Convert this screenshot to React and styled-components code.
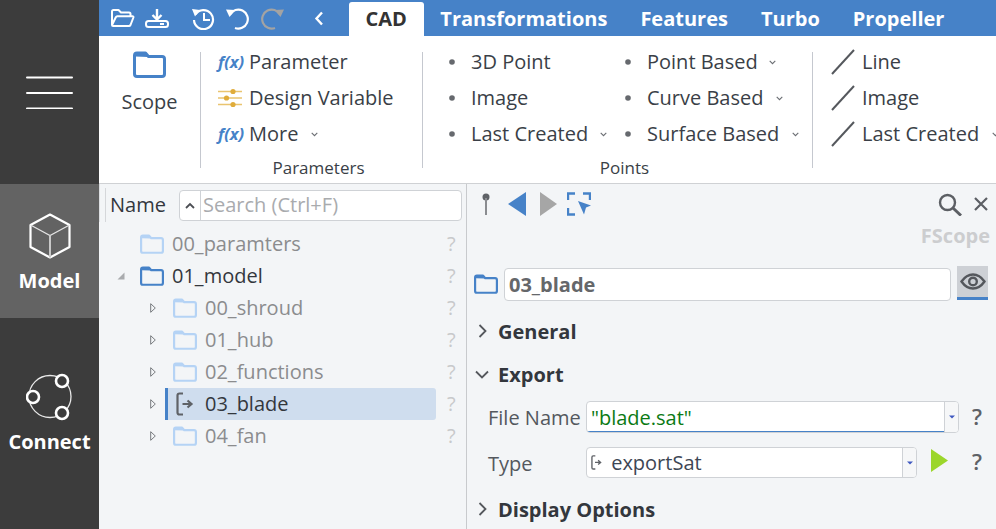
import React from 'react';
import styled, { createGlobalStyle } from 'styled-components';

const Global = createGlobalStyle`
  html, body { margin: 0; padding: 0; height: 100%; overflow: hidden; }
  #root { height: 529px; }
  * { box-sizing: border-box; }
  body { font-family: "Open Sans", "Liberation Sans", sans-serif; color: #3a3f47; }
`;

const Page = styled.div`display: flex; width: 996px; height: 529px; overflow: hidden; background: #f3f5f7;`;
const Sidebar = styled.nav`width: 99px; flex: none; background: #3c3c3c; display: flex; flex-direction: column;`;
const MenuCell = styled.div`height: 184px; display: flex; align-items: center; justify-content: center;`;
const SideItem = styled.div`
  height: ${p => p.$h}px; display: flex; flex-direction: column; align-items: center;
  padding-top: ${p => p.$top}px;
  background: ${p => p.$active ? '#636363' : 'transparent'};
  color: #fff; font-weight: 700; font-size: 20px; line-height: 26px;
`;
const SideLabel = styled.span`margin-top: ${p => p.$mt}px;`;
const Main = styled.div`flex: 1; min-width: 0; display: flex; flex-direction: column;`;

const TopBar = styled.header`height: 36px; flex: none; background: #4682c8; display: flex; align-items: flex-end;`;
const QuickIcons = styled.div`width: 250px; height: 36px; flex: none; display: flex; align-items: center;`;
const QuickSlot = styled.span`margin-left: ${p => p.$ml}px; display: block;`;
const Tab = styled.div`
  height: 34px; padding: 0 ${p => p.$active ? '17px' : '16.5px'} 2px 16.5px; display: flex; align-items: center;
  font-size: 20px; font-weight: 700; color: ${p => p.$active ? '#333' : '#fff'};
  background: ${p => p.$active ? '#fff' : 'transparent'};
  border-radius: 3px 3px 0 0;
`;
const Ribbon = styled.section`height: 148px; flex: none; background: #fff; border-bottom: 1px solid #cfd1d4; display: flex; overflow: hidden;`;
const Group = styled.div`width: ${p => p.$w}px; flex: none; display: flex; flex-direction: column;`;
const GroupBody = styled.div`display: flex; height: 116px; padding: 8px 0 0 ${p => p.$pl || 0}px;`;
const Column = styled.div`width: ${p => p.$w}px; flex: none;`;
const GroupLabel = styled.div`height: 32px; padding: 4px 0 0 14px; text-align: center; font-size: 17px; line-height: 24px;`;
const Divider = styled.div`width: 1px; height: 116px; margin-top: 16px; background: #c5c8cf; flex: none;`;
const RibbonRow = styled.div`height: 36px; display: flex; align-items: center; font-size: 20px; white-space: nowrap; line-height: 36px;`;
const RibbonIcon = styled.span`width: ${p => p.$w}px; flex: none; display: flex; align-items: center;`;
const Fx = styled.span`
  font-family: "Open Sans", sans-serif; font-style: italic; font-weight: 700; font-size: 16.5px;
  color: #4682c8;
`;
const Chev = styled.svg`margin-left: ${p => p.$ml}px; flex: none;`;
const ScopeGroup = styled.div`width: 101px; flex: none; display: flex; flex-direction: column; align-items: center; padding-top: 15px;`;
const ScopeLabel = styled.div`font-size: 20px; line-height: 28px; margin-top: 10px;`;

const Work = styled.div`flex: 1; min-height: 0; display: flex; background: #f3f5f7;`;
const TreePanel = styled.div`width: 368px; flex: none; border-right: 1px solid #c8cacd; display: flex; flex-direction: column;`;
const TreeHeader = styled.div`height: 44px; flex: none; padding: 6px 4px 0 0; display: flex; align-items: flex-start;`;
const HeaderEdge = styled.div`width: 1px; height: 38px; margin: -6px 5px 0 0; background: #dcdee1; flex: none;`;
const HeadName = styled.div`
  width: 74px; height: 34px; border-left: 1px solid #d5d7da; padding-left: 4px; margin-top: -2px;
  font-size: 20px; line-height: 34px; flex: none; color: #33373d;
`;
const SearchBox = styled.div`flex: 1; height: 31px; background: #fff; border: 1px solid #cfd2d6; border-radius: 4px; display: flex; align-items: stretch;`;
const SortCell = styled.div`width: 21px; border-right: 1px solid #cfd2d6; display: flex; align-items: center; justify-content: center; flex: none;`;
const SearchText = styled.div`padding-left: 2px; font-size: 20px; line-height: 28px; color: #a9abae;`;
const TreeList = styled.div``;
const TreeRow = styled.div`height: 32px; display: flex; align-items: center; padding-left: ${p => p.$indent}px;`;
const ArrowSlot = styled.span`width: ${p => p.$w}px; flex: none; display: flex; align-items: center;`;
const RowBody = styled.div`
  width: ${p => p.$w}px; height: 32px; flex: none; display: flex; align-items: center;
  background: ${p => p.$selected ? '#cfddee' : 'transparent'};
  border-left: 3px solid ${p => p.$selected ? '#4682c8' : 'transparent'};
  border-radius: 0 3px 3px 0; padding-left: ${p => p.$pl}px;
`;
const RowLabel = styled.span`
  margin-left: ${p => p.$ml}px; font-size: 20px; line-height: 32px; flex: 1; white-space: nowrap;
  color: ${p => p.$dim ? '#8b8c8e' : '#33373d'};
`;
const Q = styled.span`margin-left: 11px; font-size: 20px; color: #c8c9cb; flex: none; line-height: 32px;`;

const Props = styled.div`flex: 1; min-width: 0; padding: 0 8px 0 0; display: flex; flex-direction: column;`;
const ToolRow = styled.div`height: 40px; flex: none; display: flex; align-items: center; padding: 0 0 0 15px;`;
const ToolSlot = styled.span`margin-left: ${p => p.$ml}px; display: block;`;
const ToolSpacer = styled.div`flex: 1;`;
const FScope = styled.div`height: 28px; flex: none; text-align: right; font-weight: 700; font-size: 20px; line-height: 24px; color: #cccdcf; margin-right: -2px;`;
const NameRow = styled.div`height: 34px; margin: 15px 0 5px; flex: none; display: flex; align-items: center; padding-left: 7px;`;
const NameInput = styled.div`
  width: 447px; height: 33px; margin-left: 6px; background: #fff; border: 1px solid #cfd2d6; border-radius: 4px;
  padding-left: 4px; font-size: 20px; font-weight: 700; line-height: 32px; color: #65676a; flex: none;
`;
const EyeBtn = styled.div`width: 31px; height: 34px; margin: 0 0 2px 6px; background: #cdd0d5; border-bottom: 3px solid #4682c8; display: flex; align-items: center; justify-content: center; flex: none;`;
const Section = styled.div`height: ${p => p.$h}px; flex: none; display: flex; align-items: center; padding-left: ${p => p.$pl}px; font-weight: 700; font-size: 20px; color: #33373d;`;
const SectionChev = styled.span`width: ${p => p.$w}px; flex: none; display: flex; align-items: center;`;
const Field = styled.div`height: ${p => p.$h}px; flex: none; display: flex; align-items: center; padding-left: 21px;`;
const FieldLabel = styled.div`width: 98px; flex: none; font-size: 20px; color: #54585e; white-space: nowrap;`;
const Combo = styled.div`
  width: ${p => p.$w}px; height: ${p => p.$h}px; margin-bottom: 2px; flex: none; background: #fff; border: 1px solid #cfd2d6; border-radius: 4px;
  display: flex; align-items: stretch; overflow: hidden;
`;
const ComboValue = styled.div`
  flex: 1; display: flex; align-items: center; padding: ${p => p.$focus ? '3px' : '0'} 0 0 4px; font-size: 20px; line-height: 26px; white-space: nowrap;
  color: ${p => p.$code ? '#0b7a14' : '#3d4654'};
  border-bottom: ${p => p.$focus ? '1px solid #4682c8' : '0'};
`;
const ComboText = styled.span`margin-left: 9px;`;
const ComboDrop = styled.div`width: 14px; flex: none; border-left: 1px solid #cfd2d6; background: #f6f7f8; display: flex; align-items: center; justify-content: center;`;
const PlaySlot = styled.span`margin: 0 0 6px 14px; width: 41px; flex: none; display: flex; align-items: center;`;
const FieldQ = styled.span`margin: 0 0 ${p => p.$mb}px ${p => p.$ml}px; font-size: 22px; font-weight: 600; color: #5e6166; flex: none; line-height: 26px;`;

const I = ({ w, h, children, ...r }) => <svg width={w} height={h} viewBox={`0 0 ${w} ${h}`} fill="none" style={{ display: 'block', flex: 'none' }} {...r}>{children}</svg>;

const FolderOpen = () => <I w={25} h={20}><path d="M2 17V3.500C2 2.600 2.600 2 3.500 2h5l2.500 2.500h8c.9 0 1.500.6 1.500 1.500v2M2 17c0 .6.5 1 1 1h16c.7 0 1.200-.4 1.500-1L23.400 9.500c.2-.7-.2-1.300-1-1.300H7.300c-.7 0-1.200.4-1.500 1L2 17z" stroke="#fff" strokeWidth="2" strokeLinejoin="round" /></I>;
const Download = () => <I w={24} h={20}><path d="M12 1v10M7.500 7l4.500 4.500L16.500 7" stroke="#fff" strokeWidth="2.400" /><rect x="1" y="13" width="22" height="6" rx="2.500" stroke="#fff" strokeWidth="2" /><rect x="15" y="15" width="4" height="2" fill="#fff" /></I>;
const History = () => <I w={24} h={24}><path d="M4.500 8.500A9.500 9.500 0 1 1 3 14" stroke="#fff" strokeWidth="2.200" /><path d="M1 3l8 1-5 6.500z" fill="#fff" /><path d="M13 7v7h6" stroke="#fff" strokeWidth="2" /></I>;
const Undo = ({ c = '#fff', flip }) => <I w={25} h={24} style={{ display: 'block', flex: 'none', transform: flip ? 'scaleX(-1)' : 'none' }}><path d="M5 8.500A9.500 9.500 0 1 1 10 22" stroke={c} strokeWidth="2.200" /><path d="M1 3.500l9.500.5-6 7z" fill={c} /></I>;
const Back = () => <I w={10} h={15}><path d="M8 1.500L2.500 7.500 8 13.500" stroke="#fff" strokeWidth="2.400" /></I>;
const ScopeFolder = ({ s = 33, h = 27, c = '#4682c8' }) => <svg width={s} height={h} viewBox="0 0 33 27" fill="none" style={{ display: 'block', flex: 'none' }}><path d="M1.500 6V23c0 1.400 1 2.500 2.500 2.500h25c1.400 0 2.500-1 2.500-2.500V8c0-1.400-1-2.500-2.500-2.500H15.500L12.500 2H4C2.600 2 1.500 3 1.500 4.500z" stroke={c} strokeWidth="3" strokeLinejoin="round" /><path d="M2 5.500V3l2-1h8l3 4z" fill={c} /></svg>;
const Sliders = () => <I w={24} h={20}><path d="M0 3.500h24M0 10h24M0 16.500h24" stroke="#e9c46f" strokeWidth="1.600" /><circle cx="15" cy="3.500" r="2.600" fill="#e0ac3a" /><circle cx="8.500" cy="10" r="2.600" fill="#e0ac3a" /><circle cx="15" cy="16.500" r="2.600" fill="#e0ac3a" /></I>;
const SmallChev = ({ ml }) => <Chev $ml={ml} width="7" height="5" viewBox="0 0 7 5" fill="none"><path d="M.7.8l2.800 2.800L6.300.8" stroke="#6b6e73" strokeWidth="1.100" /></Chev>;
const Dot = () => <I w={6} h={6}><circle cx="3" cy="3" r="2.800" fill="#66696e" /></I>;
const LineIco = () => <I w={24} h={26}><path d="M1 25L23 1" stroke="#55585d" strokeWidth="2" /></I>;

const RRow = ({ icon, w, children, chev }) => <RibbonRow><RibbonIcon $w={w}>{icon}</RibbonIcon><span>{children}</span>{chev != null && <SmallChev ml={chev} />}</RibbonRow>;

const TriRight = () => <I w={6} h={10}><path d="M.7.7L5.300 5 .7 9.300z" stroke="#777a7e" strokeWidth="1" /></I>;
const TriDown = () => <I w={8} h={8}><path d="M7.500.5V7.500H.5z" fill="#a9abae" /></I>;
const ExportIco = ({ s = 1 }) => <svg width={18 * s} height={24 * s} viewBox="0 0 18 24" fill="none" style={{ display: 'block', flex: 'none' }}><path d="M7 1.500H3.500C2.400 1.500 1.500 2.400 1.500 3.500V20.500C1.500 21.600 2.400 22.500 3.500 22.500H7" stroke="#5f6267" strokeWidth="2.200" /><path d="M6.500 12H15M11.500 8.500L15.500 12 11.500 15.500" stroke="#5f6267" strokeWidth="2.200" /></svg>;

const Row = ({ level, name, dim, open, selected, icon, noArrow }) => {
  const top = level === 0;
  return (
    <TreeRow $indent={top ? 18 : 51}>
      <ArrowSlot $w={top ? 20 : 15}>{noArrow ? null : open ? <TriDown /> : <TriRight />}</ArrowSlot>
      <RowBody $w={top ? 299 : 271} $selected={selected} $pl={top ? 0 : (selected ? 8 : 5)}>
        {icon || <ScopeFolder s={24} h={20} c={dim ? '#b5d3f5' : '#4682c8'} />}
        <RowLabel $ml={selected ? 11 : 8} $dim={dim}>{name}</RowLabel>
      </RowBody>
      <Q>?</Q>
    </TreeRow>
  );
};

const Caret = () => <I w={6} h={4}><path d="M0 .5h6L3 3.500z" fill="#3f58c0" /></I>;
const ChevR = () => <I w={9} h={14}><path d="M1.500 1l6 6-6 6" stroke="#55585d" strokeWidth="1.800" /></I>;
const ChevD = () => <I w={14} h={9}><path d="M1 1.500l6 6 6-6" stroke="#55585d" strokeWidth="1.800" /></I>;

export default function App() {
  return (
    <Page>
      <Global />
      <Sidebar>
        <MenuCell>
          <I w={47} h={33}><path d="M1 1.500h45M1 17h45M1 32.500h45" stroke="#fff" strokeWidth="2" strokeLinecap="round" /></I>
        </MenuCell>
        <SideItem $active $h={134} $top={29}>
          <I w={42} h={46}><path d="M21 1.500L40.500 12V34L21 44.500 1.500 34V12z" stroke="#fff" strokeWidth="2.200" strokeLinejoin="round" /><path d="M1.500 12L21 22.500 40.500 12" stroke="#e4e4e4" strokeWidth="1.200" /><path d="M21 22.500V44.500" stroke="#c9c9c9" strokeWidth="2" /></I>
          <SideLabel $mt={9}>Model</SideLabel>
        </SideItem>
        <SideItem $h={211} $top={55}>
          <I w={48} h={48}><circle cx="24" cy="23.500" r="21" stroke="#e8e8e8" strokeWidth="1.300" /><circle cx="36" cy="8" r="6" stroke="#fff" strokeWidth="2.600" fill="#3c3c3c" /><circle cx="7" cy="24" r="6" stroke="#fff" strokeWidth="2.600" fill="#3c3c3c" /><circle cx="36" cy="40" r="6" stroke="#fff" strokeWidth="2.600" fill="#3c3c3c" /></I>
          <SideLabel $mt={8}>Connect</SideLabel>
        </SideItem>
      </Sidebar>
      <Main>
        <TopBar>
          <QuickIcons>
            <QuickSlot $ml={11}><FolderOpen /></QuickSlot>
            <QuickSlot $ml={10}><Download /></QuickSlot>
            <QuickSlot $ml={22}><History /></QuickSlot>
            <QuickSlot $ml={10}><Undo /></QuickSlot>
            <QuickSlot $ml={10}><Undo c="#a3a3a3" flip /></QuickSlot>
            <QuickSlot $ml={29}><Back /></QuickSlot>
          </QuickIcons>
          <Tab $active>CAD</Tab>
          <Tab>Transformations</Tab>
          <Tab>Features</Tab>
          <Tab>Turbo</Tab>
          <Tab>Propeller</Tab>
        </TopBar>
        <Ribbon>
          <ScopeGroup>
            <ScopeFolder />
            <ScopeLabel>Scope</ScopeLabel>
          </ScopeGroup>
          <Divider />
          <Group $w={221}>
            <GroupBody $pl={17}>
              <Column $w={200}>
                <RRow w={31} icon={<Fx>f(x)</Fx>}>Parameter</RRow>
                <RRow w={31} icon={<Sliders />}>Design Variable</RRow>
                <RRow w={31} icon={<Fx>f(x)</Fx>} chev={13}>More</RRow>
              </Column>
            </GroupBody>
            <GroupLabel>Parameters</GroupLabel>
          </Group>
          <Divider />
          <Group $w={389}>
            <GroupBody $pl={26}>
              <Column $w={176}>
                <RRow w={22} icon={<Dot />}>3D Point</RRow>
                <RRow w={22} icon={<Dot />}>Image</RRow>
                <RRow w={22} icon={<Dot />} chev={12}>Last Created</RRow>
              </Column>
              <Column $w={180}>
                <RRow w={22} icon={<Dot />} chev={11}>Point Based</RRow>
                <RRow w={22} icon={<Dot />} chev={13}>Curve Based</RRow>
                <RRow w={22} icon={<Dot />} chev={13}>Surface Based</RRow>
              </Column>
            </GroupBody>
            <GroupLabel>Points</GroupLabel>
          </Group>
          <Divider />
          <Group $w={200}>
            <GroupBody $pl={18}>
              <Column $w={180}>
                <RRow w={31} icon={<LineIco />}>Line</RRow>
                <RRow w={31} icon={<LineIco />}>Image</RRow>
                <RRow w={31} icon={<LineIco />} chev={13}>Last Created</RRow>
              </Column>
            </GroupBody>
          </Group>
        </Ribbon>
        <Work>
          <TreePanel>
            <TreeHeader>
              <HeaderEdge />
              <HeadName>Name</HeadName>
              <SearchBox>
                <SortCell><I w={10} h={7}><path d="M1 6l4-4 4 4" stroke="#4b4e53" strokeWidth="1.800" /></I></SortCell>
                <SearchText>Search (Ctrl+F)</SearchText>
              </SearchBox>
            </TreeHeader>
            <TreeList>
              <Row level={0} name="00_paramters" dim noArrow />
              <Row level={0} name="01_model" open />
              <Row level={1} name="00_shroud" dim />
              <Row level={1} name="01_hub" dim />
              <Row level={1} name="02_functions" dim />
              <Row level={1} name="03_blade" selected icon={<ExportIco />} />
              <Row level={1} name="04_fan" dim />
            </TreeList>
          </TreePanel>
          <Props>
            <ToolRow>
              <I w={8} h={22}><circle cx="4" cy="4" r="3.500" fill="#5f6267" /><path d="M4 5v17" stroke="#8a8c90" strokeWidth="2" /></I>
              <ToolSlot $ml={18}><I w={18} h={24}><path d="M18 0v24L0 12z" fill="#4682c8" /></I></ToolSlot>
              <ToolSlot $ml={14}><I w={17} h={24}><path d="M0 0v24l17-12z" fill="#a6a6a6" /></I></ToolSlot>
              <ToolSlot $ml={10}>
                <I w={24} h={24}><path d="M1 8V1.500h7M16 1.500h7V8M1 16v6.500h7" stroke="#4682c8" strokeWidth="2.400" /><path d="M11 9l13 4.500-5 2-2 7z" fill="#4682c8" /></I>
              </ToolSlot>
              <ToolSpacer />
              <I w={24} h={23}><circle cx="9.500" cy="9.500" r="7.500" stroke="#5c5f64" strokeWidth="2.400" /><path d="M15 15l8 7.500" stroke="#5c5f64" strokeWidth="3" /></I>
              <ToolSlot $ml={12}><I w={14} h={14}><path d="M1 1l12 12M13 1L1 13" stroke="#5c5f64" strokeWidth="2.200" /></I></ToolSlot>
            </ToolRow>
            <FScope>FScope</FScope>
            <NameRow>
              <ScopeFolder s={24} h={20} />
              <NameInput>03_blade</NameInput>
              <EyeBtn>
                <I w={26} h={17}><path d="M1.500 8.500C5 3.500 9 1.500 13 1.500s8 2 11.500 7c-3.500 5-7.500 7-11.500 7s-8-2-11.500-7z" stroke="#54575c" strokeWidth="2.400" /><circle cx="13" cy="8.500" r="3.800" stroke="#54575c" strokeWidth="2.400" /></I>
              </EyeBtn>
            </NameRow>
            <Section $h={50} $pl={11}><SectionChev $w={20}><ChevR /></SectionChev>General</Section>
            <Section $h={37} $pl={8}><SectionChev $w={23}><ChevD /></SectionChev>Export</Section>
            <Field $h={49}>
              <FieldLabel>File Name</FieldLabel>
              <Combo $w={373} $h={32}>
                <ComboValue $code $focus>"blade.sat"</ComboValue>
                <ComboDrop><Caret /></ComboDrop>
              </Combo>
              <FieldQ $ml={13} $mb={4}>?</FieldQ>
            </Field>
            <Field $h={43}>
              <FieldLabel>Type</FieldLabel>
              <Combo $w={331} $h={31}>
                <ComboValue><ExportIco s={0.62} /><ComboText>exportSat</ComboText></ComboValue>
                <ComboDrop><Caret /></ComboDrop>
              </Combo>
              <PlaySlot><I w={17} h={23}><path d="M0 0l17 11.500L0 23z" fill="#9bd62b" /></I></PlaySlot>
              <FieldQ $ml={0} $mb={5}>?</FieldQ>
            </Field>
            <Section $h={48} $pl={11}><SectionChev $w={20}><ChevR /></SectionChev>Display Options</Section>
          </Props>
        </Work>
      </Main>
    </Page>
  );
}
